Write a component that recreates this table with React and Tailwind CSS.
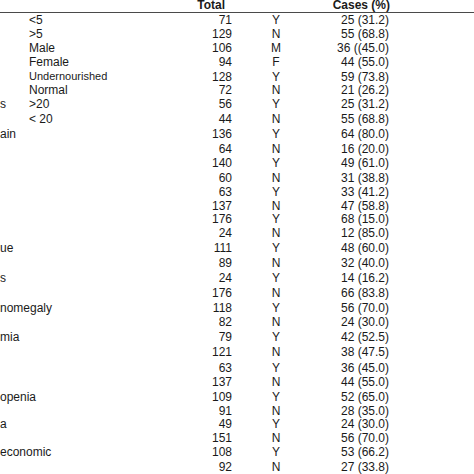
const rows = [
  { h: "h-[13.5px]", a: "", b: "<5", c: "71", d: "Y", e: "25 (31.2)" },
  { h: "h-[14px]", a: "", b: ">5", c: "129", d: "N", e: "55 (68.8)" },
  { h: "h-[14.5px]", a: "", b: "Male", c: "106", d: "M", e: "36 ((45.0)" },
  { h: "h-[14.5px]", a: "", b: "Female", c: "94", d: "F", e: "44 (55.0)" },
  { h: "h-[14px]", a: "", b: "Undernourished", small: true, c: "128", d: "Y", e: "59 (73.8)" },
  { h: "h-[13.5px]", a: "", b: "Normal", c: "72", d: "N", e: "21 (26.2)" },
  { h: "h-[14px]", a: "s", b: ">20", c: "56", d: "Y", e: "25 (31.2)" },
  { h: "h-[15.5px]", a: "", b: "< 20", c: "44", d: "N", e: "55 (68.8)" },
  { h: "h-[15.5px]", a: "ain", b: "", c: "136", d: "Y", e: "64 (80.0)" },
  { h: "h-[14px]", a: "", b: "", c: "64", d: "N", e: "16 (20.0)" },
  { h: "h-[14.5px]", a: "", b: "", c: "140", d: "Y", e: "49 (61.0)" },
  { h: "h-[14.5px]", a: "", b: "", c: "60", d: "N", e: "31 (38.8)" },
  { h: "h-[14px]", a: "", b: "", c: "63", d: "Y", e: "33 (41.2)" },
  { h: "h-[13.5px]", a: "", b: "", c: "137", d: "N", e: "47 (58.8)" },
  { h: "h-[13.5px]", a: "", b: "", c: "176", d: "Y", e: "68 (15.0)" },
  { h: "h-[14.5px]", a: "", b: "", c: "24", d: "N", e: "12 (85.0)" },
  { h: "h-[15px]", a: "ue", b: "", c: "111", d: "Y", e: "48 (60.0)" },
  { h: "h-[14.5px]", a: "", b: "", c: "89", d: "N", e: "32 (40.0)" },
  { h: "h-[15px]", a: "s", b: "", c: "24", d: "Y", e: "14 (16.2)" },
  { h: "h-[15.5px]", a: "", b: "", c: "176", d: "N", e: "66 (83.8)" },
  { h: "h-[14.5px]", a: "nomegaly", b: "", c: "118", d: "Y", e: "56 (70.0)" },
  { h: "h-[14.5px]", a: "", b: "", c: "82", d: "N", e: "24 (30.0)" },
  { h: "h-[15px]", a: "mia", b: "", c: "79", d: "Y", e: "42 (52.5)" },
  { h: "h-[15.5px]", a: "", b: "", c: "121", d: "N", e: "38 (47.5)" },
  { h: "h-[15px]", a: "", b: "", c: "63", d: "Y", e: "36 (45.0)" },
  { h: "h-[14.5px]", a: "", b: "", c: "137", d: "N", e: "44 (55.0)" },
  { h: "h-[14.5px]", a: "openia", b: "", c: "109", d: "Y", e: "52 (65.0)" },
  { h: "h-[13.5px]", a: "", b: "", c: "91", d: "N", e: "28 (35.0)" },
  { h: "h-[13px]", a: "a", b: "", c: "49", d: "Y", e: "24 (30.0)" },
  { h: "h-[14px]", a: "", b: "", c: "151", d: "N", e: "56 (70.0)" },
  { h: "h-[15px]", a: "economic", b: "", c: "108", d: "Y", e: "53 (66.2)" },
  { h: "h-[15px]", a: "", b: "", c: "92", d: "N", e: "27 (33.8)" },
];

export default function App() {
  return (
    <div className="w-[474px] h-[474px] overflow-hidden bg-white text-[#1a1a1a] text-[12px] font-['Liberation_Sans',Arial,sans-serif]">
      {/* header row, its top is cropped in the source image */}
      <div className="flex h-[13px] border-b border-[#4a4a4a] font-bold leading-[11px] items-start">
        <div className="w-[29px]" />
        <div className="w-[140px]" />
        <div className="w-[63px] text-right pr-[7px]">Total</div>
        <div className="w-[88px]" />
        <div className="w-[124px] text-right pr-[54px]">Cases (%)</div>
      </div>

      {rows.map((r, i) => (
        <div key={i} className={"flex items-center " + r.h}>
          <div className="w-[29px] whitespace-nowrap">{r.a}</div>
          <div className={"w-[140px] whitespace-nowrap " + (r.small ? "text-[11px]" : "")}>{r.b}</div>
          <div className="w-[63px] text-right">{r.c}</div>
          <div className="w-[88px] text-center">{r.d}</div>
          <div className="w-[124px] text-right pr-[55px] whitespace-nowrap">{r.e}</div>
        </div>
      ))}
    </div>
  );
}
